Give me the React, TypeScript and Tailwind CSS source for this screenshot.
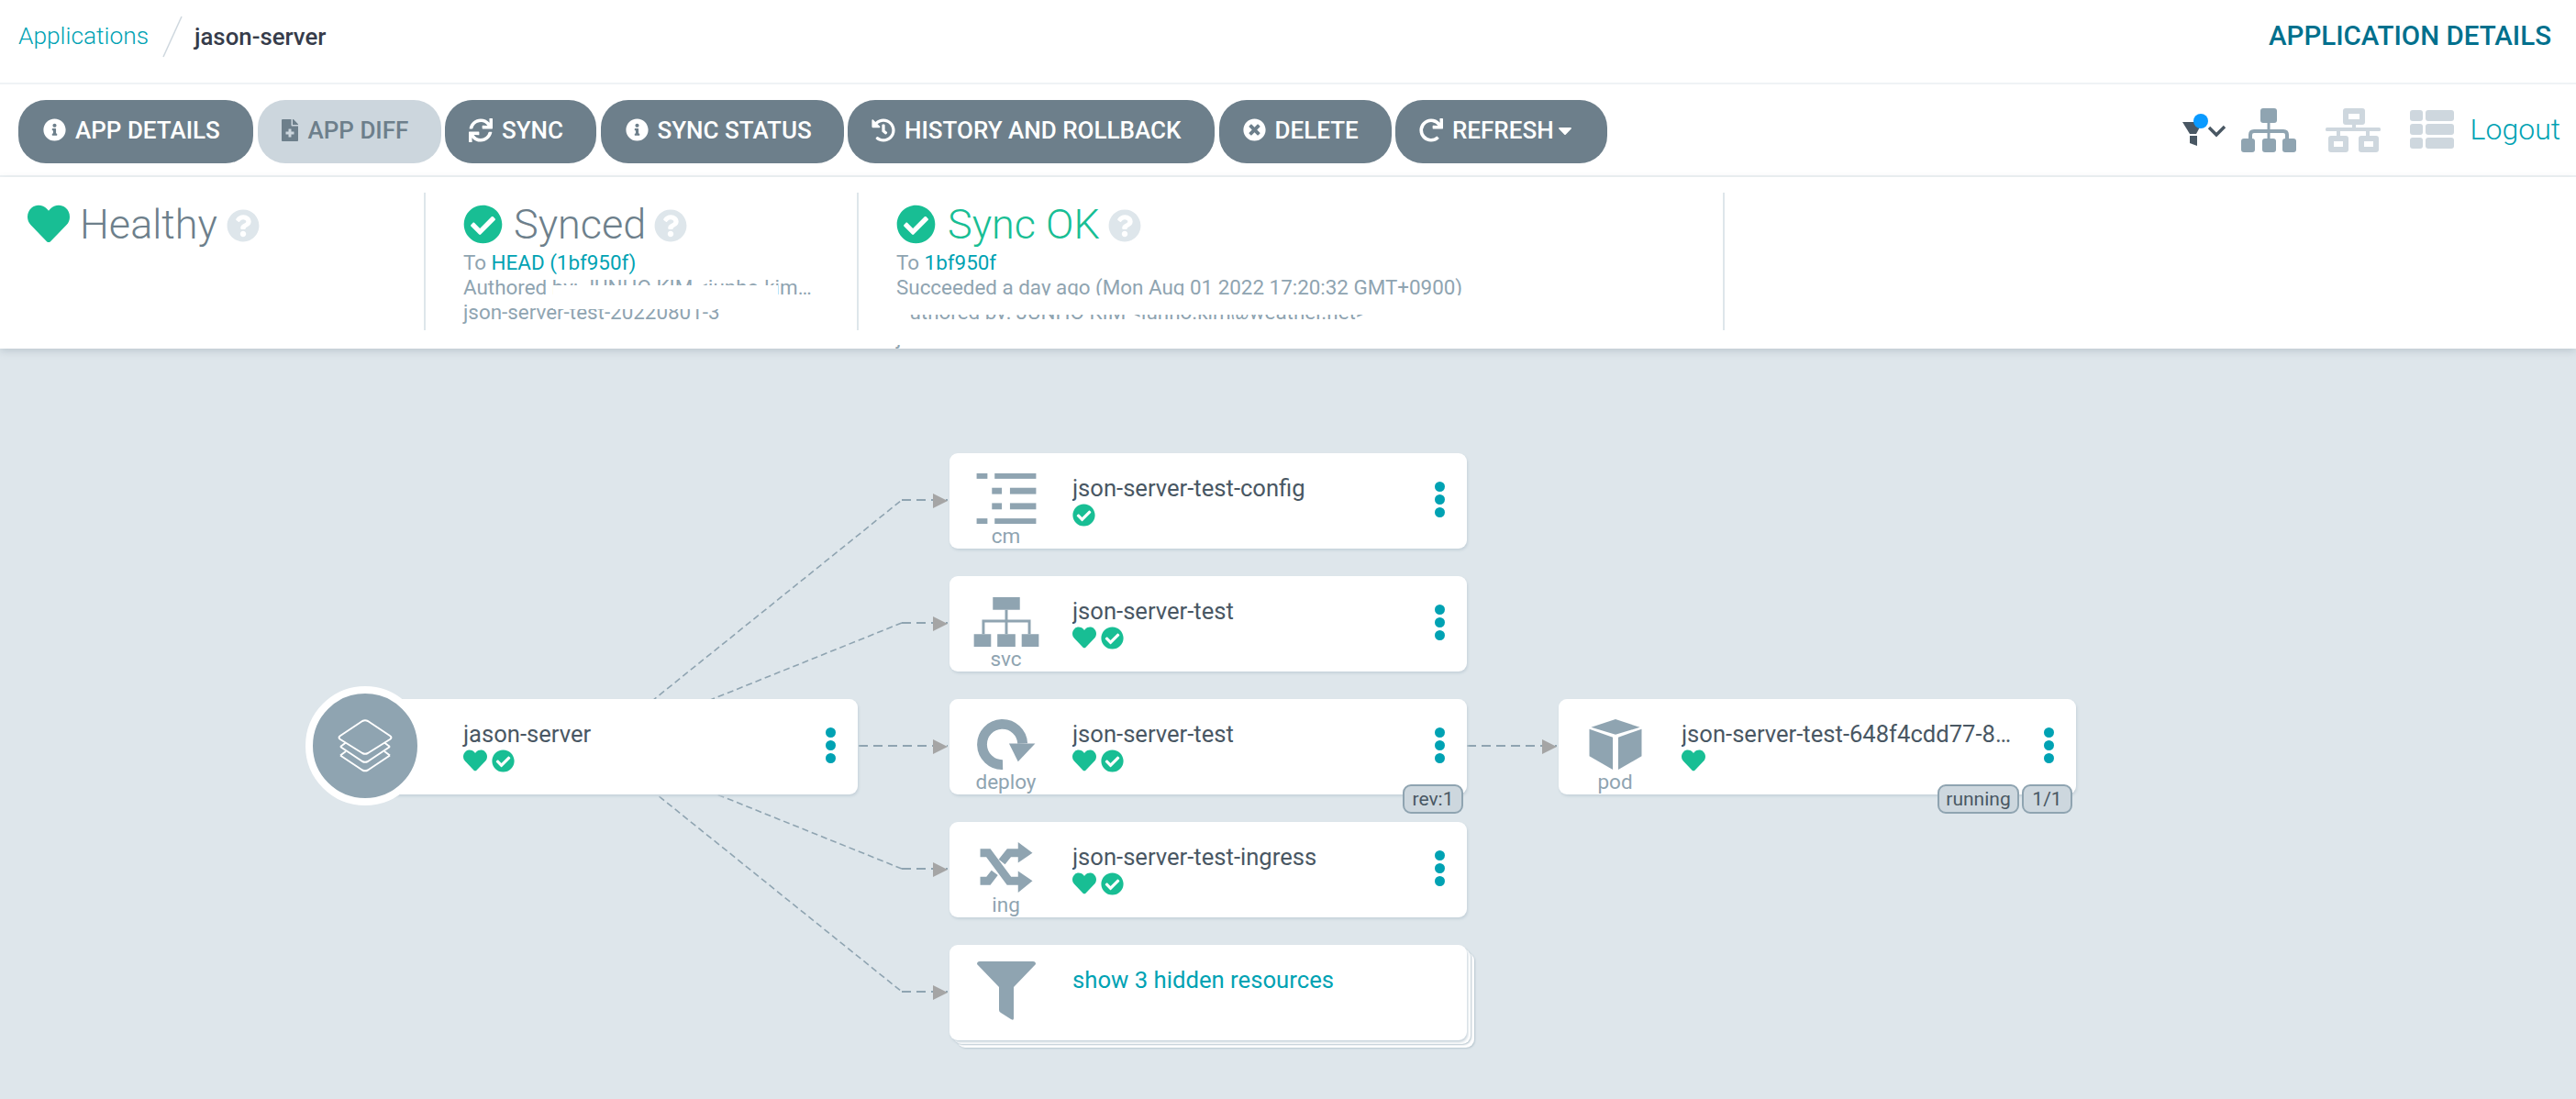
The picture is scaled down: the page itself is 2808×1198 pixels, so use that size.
import React from "react";
import {
  FaInfoCircle,
  FaFileMedical,
  FaSync,
  FaHistory,
  FaTimesCircle,
  FaRedo,
  FaCaretDown,
  FaHeart,
  FaCheckCircle,
  FaQuestionCircle,
} from "react-icons/fa";

const BTN =
  "flex h-[69px] shrink-0 items-center gap-[10px] rounded-[30px] bg-[#6d7f8b] pb-[3px] text-[26px] font-medium leading-none text-white";

function Dots() {
  return (
    <div className="absolute right-[24px] top-[31px] flex flex-col gap-[3px]">
      <span className="block h-[11px] w-[11px] rounded-full bg-[#00a2b3]" />
      <span className="block h-[11px] w-[11px] rounded-full bg-[#00a2b3]" />
      <span className="block h-[11px] w-[11px] rounded-full bg-[#00a2b3]" />
    </div>
  );
}

function Status({ heart = true, check = true }: { heart?: boolean; check?: boolean }) {
  return (
    <div className="mt-[2px] flex h-[26px] items-center gap-[5px] text-[#18be94]">
      {heart && <FaHeart size={26} />}
      {check && <FaCheckCircle size={25} />}
    </div>
  );
}

function Card({
  className,
  icon,
  kind,
  name,
  heart,
  check,
  children,
}: {
  className: string;
  icon: React.ReactNode;
  kind: string;
  name: string;
  heart?: boolean;
  check?: boolean;
  children?: React.ReactNode;
}) {
  return (
    <div className={"absolute flex h-[104px] w-[564px] rounded-[9px] bg-white shadow-[1px_2px_3px_#c6d2da] " + className}>
      <div className="flex w-[123px] shrink-0 flex-col items-center pt-[22px]">
        {icon}
        <div className="text-[22.5px] leading-[27px] text-[#8fa4b1]">{kind}</div>
      </div>
      <div className="ml-[11px] w-[364px] pt-[24px]">
        <div className="truncate text-[25.6px] leading-[28px] text-[#495763]">{name}</div>
        <Status heart={heart} check={check} />
      </div>
      <Dots />
      {children}
    </div>
  );
}

function Badge({ children, className }: { children: React.ReactNode; className: string }) {
  return (
    <div
      className={
        "absolute top-[93px] flex h-[32px] items-center justify-center rounded-[9px] border-2 border-[#8fa4b1] bg-[#cdd7de] text-[21px] leading-none text-[#495763] " +
        className
      }
    >
      {children}
    </div>
  );
}

const G = "#8fa4b1";

function CmIcon() {
  return (
    <svg width="66" height="56" viewBox="0 0 66 56" fill={G}>
      <rect x="0" y="0" width="12" height="6" />
      <rect x="20" y="0" width="46" height="6" />
      <rect x="17" y="16" width="11" height="7" />
      <rect x="37" y="16" width="29" height="7" />
      <rect x="17" y="33" width="11" height="7" />
      <rect x="37" y="33" width="29" height="7" />
      <rect x="0" y="50" width="12" height="6" />
      <rect x="20" y="50" width="46" height="6" />
    </svg>
  );
}

function SvcIcon() {
  return (
    <svg width="72" height="56" viewBox="0 0 72 56" fill={G}>
      <rect x="21" y="1" width="30" height="14" />
      <rect x="34.5" y="15" width="3" height="27" />
      <path d="M9 42V26H63V42H60V29H12V42Z" />
      <rect x="0" y="42" width="19" height="14" />
      <rect x="26" y="42" width="20" height="14" />
      <rect x="53" y="42" width="19" height="14" />
    </svg>
  );
}

function DeployIcon() {
  return (
    <svg width="64" height="56" viewBox="0 0 64 56">
      <path d="M28 50.5A22.5 22.5 0 1 1 50 27" fill="none" stroke={G} strokeWidth="11" />
      <path d="M35 27H64L45 47Z" fill={G} />
    </svg>
  );
}

function IngIcon() {
  return (
    <svg width="58" height="56" viewBox="0 0 58 56" fill="none" stroke={G} strokeWidth="9">
      <path d="M0 12H9L32 43H44" />
      <path d="M0 43H9L16 34" />
      <path d="M24 22L32 12H44" />
      <path d="M42 0L58 12L42 23Z" fill={G} stroke="none" />
      <path d="M42 32L58 43L42 56Z" fill={G} stroke="none" />
    </svg>
  );
}

function FunnelIcon() {
  return (
    <svg width="64" height="64" viewBox="0 0 64 64" fill={G}>
      <path d="M3 0H61Q64 0 64 3L40 28V62Q40 65 37 63L26 56Q24 55 24 53V28L0 3Q0 0 3 0Z" />
    </svg>
  );
}

function PodIcon() {
  return (
    <svg width="58" height="56" viewBox="0 0 58 56" fill={G}>
      <path d="M29 0L56 9L29 17L2 9Z" />
      <path d="M0 11L26 20V56L0 41Z" />
      <path d="M58 11L32 20V56L58 41Z" />
    </svg>
  );
}

function LayersIcon() {
  return (
    <svg width="60" height="58" viewBox="0 0 60 58" fill="none" stroke="#fff" strokeWidth="2" strokeLinejoin="round">
      <path d="M3 39.5L9 35M57 39.5L51 35M3 39.5L27 55.5Q30 57 33 55.5L57 39.5" />
      <path d="M3 30L9 25.5M57 30L51 25.5M3 30L27 46Q30 47.5 33 46L57 30" />
      <path d="M27 2Q30 0.5 33 2L57 18Q60 20 57 22L33 37Q30 38.5 27 37L3 22Q0 20 3 18Z" />
    </svg>
  );
}

function Edge({ y2 }: { y2: number }) {
  return (
    <g>
      <line x1={650} y1={813} x2="983" y2={y2} stroke={G} strokeWidth="1.6" strokeDasharray="7 4" />
      <line x1="983" y1={y2} x2="1033" y2={y2} stroke={G} strokeWidth="1.8" strokeDasharray="10 6" />
      <path d={`M1017 ${y2 - 7}L1033 ${y2 + 1}L1017 ${y2 + 9}Z`} fill="#a5a5a5" />
    </g>
  );
}

export default function App() {
  return (
    <div className="flex h-[1198px] w-[2808px] flex-col overflow-hidden bg-[#dee6eb] font-['Roboto',sans-serif]">
      {/* breadcrumb bar */}
      <div className="flex h-[92px] shrink-0 items-center border-b-2 border-[#eff3f5] bg-white pb-[10px] pl-[20px] pr-[27px]">
        <span className="text-[26.3px] font-light text-[#00a2b3]">Applications</span>
        <svg className="ml-[15px] mr-[13px]" width="22" height="46" viewBox="0 0 22 46">
          <line x1="21" y1="1" x2="1" y2="45" stroke="#ced7de" strokeWidth="1.5" />
        </svg>
        <span className="text-[25.8px] font-medium text-[#363c4a]">jason-server</span>
        <span className="ml-auto -mt-[2px] text-[29.5px] font-medium text-[#00708d]">APPLICATION DETAILS</span>
      </div>

      {/* toolbar */}
      <div className="flex h-[101px] shrink-0 items-center gap-[4.5px] border-b-2 border-[#eff3f5] bg-white pl-[20px] pt-[3px]">
        <div className={BTN + " w-[256px] pl-[27px]"}>
          <FaInfoCircle size={25} />
          APP DETAILS
        </div>
        <div className="flex h-[69px] w-[200px] shrink-0 items-center gap-[8px] rounded-[30px] bg-[#ccd6dd] pb-[3px] pl-[23px] text-[26px] font-medium leading-none text-[#6d7f8b]">
          <FaFileMedical size={24} />
          APP DIFF
        </div>
        <div className={BTN + " w-[165px] pl-[26px]"}>
          <FaSync size={26} />
          SYNC
        </div>
        <div className={BTN + " w-[265px] pl-[27px]"}>
          <FaInfoCircle size={25} />
          SYNC STATUS
        </div>
        <div className={BTN + " w-[400px] pl-[26px]"}>
          <FaHistory size={26} />
          HISTORY AND ROLLBACK
        </div>
        <div className={BTN + " w-[188px] pl-[26px]"}>
          <FaTimesCircle size={25} />
          DELETE
        </div>
        <div className={BTN + " w-[231px] pl-[26px]"}>
          <FaRedo size={26} />
          REFRESH
          <FaCaretDown size={24} className="-ml-[10px]" />
        </div>
        <div className="ml-auto mr-[17px] -mt-[3px] flex items-center">
          <svg className="mr-[16px]" width="48" height="36" viewBox="0 0 48 36">
            <path d="M0 9H22L15 22H8Z" fill="#495763" />
            <path d="M8 24H16V35L8 32Z" fill="#495763" />
            <circle cx="20" cy="8" r="8" fill="#0a9aff" />
            <path d="M29 15L37 23L46 14" fill="none" stroke="#495763" strokeWidth="3.4" />
          </svg>
          <svg className="mr-[32px]" width="60" height="48" viewBox="0 0 60 48" fill="#8fa4b1">
            <rect x="21" y="0" width="18" height="16" rx="3" />
            <rect x="28.5" y="16" width="3" height="18" />
            <path d="M8 34V29Q8 23 14 23H46Q52 23 52 29V34H48V29Q48 27 46 27H14Q12 27 12 29V34Z" />
            <rect x="0" y="33" width="15" height="15" rx="3" />
            <rect x="23" y="33" width="15" height="15" rx="3" />
            <rect x="45" y="33" width="15" height="15" rx="3" />
          </svg>
          <svg className="mr-[32px]" width="60" height="48" viewBox="0 0 60 48" fill="#ced7de">
            <path fillRule="evenodd" d="M22 0H40Q43 0 43 3V15Q43 18 40 18H22Q19 18 19 15V3Q19 0 22 0ZM25 6V12H37V6Z" />
            <rect x="29" y="18" width="4" height="5" />
            <rect x="0" y="21" width="60" height="4" rx="1.5" />
            <rect x="12" y="25" width="4" height="6" />
            <rect x="44" y="25" width="4" height="6" />
            <path fillRule="evenodd" d="M6 30H22Q25 30 25 33V45Q25 48 22 48H6Q3 48 3 45V33Q3 30 6 30ZM9 36V42H19V36Z" />
            <path fillRule="evenodd" d="M39 30H55Q58 30 58 33V45Q58 48 55 48H39Q36 48 36 45V33Q36 30 39 30ZM42 36V42H52V36Z" />
          </svg>
          <svg className="mr-[18px]" width="48" height="43" viewBox="0 0 48 43" fill="#ced7de">
            <rect x="0" y="0" width="14" height="12" rx="3" />
            <rect x="17" y="0" width="31" height="12" rx="3" />
            <rect x="0" y="15" width="14" height="12" rx="3" />
            <rect x="17" y="15" width="31" height="12" rx="3" />
            <rect x="0" y="30" width="14" height="12" rx="3" />
            <rect x="17" y="30" width="31" height="12" rx="3" />
          </svg>
          <span className="-mt-[2px] text-[32px] font-light leading-none text-[#00a2b3]">Logout</span>
        </div>
      </div>

      {/* status panel */}
      <div className="relative z-10 flex h-[187px] shrink-0 overflow-hidden bg-white pt-[17px] text-[22.4px] leading-[27px] text-[#8fa4b1] shadow-[0_3px_8px_rgba(100,120,135,0.25)]">
        <div className="h-[150px] w-[464px] shrink-0 border-r-2 border-[#dee6eb] pl-[30px] pt-[10px]">
          <div className="flex h-[48px] items-center">
            <FaHeart size={46} className="text-[#18be94]" />
            <span className="ml-[11px] text-[45px] font-light leading-none text-[#6d7f8b]">Healthy</span>
            <FaQuestionCircle size={36} className="ml-[10px] mt-[4px] text-[#dee6eb]" />
          </div>
        </div>
        <div className="h-[150px] w-[472px] shrink-0 border-r-2 border-[#dee6eb] pl-[41px] pt-[10px]">
          <div className="flex h-[48px] items-center">
            <FaCheckCircle size={43} className="text-[#18be94]" />
            <span className="ml-[12px] text-[45px] font-light leading-none text-[#6d7f8b]">Synced</span>
            <FaQuestionCircle size={36} className="ml-[9px] mt-[4px] text-[#dee6eb]" />
          </div>
          <div className="mt-[5px] whitespace-nowrap">
            To <span className="text-[#00a2b3]">HEAD (1bf950f)</span>
          </div>
          <div className="w-[382px] truncate">Authored by: JUNHO KIM &lt;junho.kim@weatherai.net&gt;</div>
          <div className="whitespace-nowrap">json-server-test-20220801-3</div>
        </div>
        <div className="h-[150px] w-[944px] shrink-0 border-r-2 border-[#dee6eb] pl-[41px] pt-[10px]">
          <div className="flex h-[48px] items-center">
            <FaCheckCircle size={43} className="text-[#18be94]" />
            <span className="ml-[13px] text-[45px] font-light leading-none text-[#18be94]">Sync OK</span>
            <FaQuestionCircle size={36} className="ml-[9px] mt-[4px] text-[#dee6eb]" />
          </div>
          <div className="mt-[5px] whitespace-nowrap">
            To <span className="text-[#00a2b3]">1bf950f</span>
          </div>
          <div className="whitespace-nowrap">Succeeded a day ago (Mon Aug 01 2022 17:20:32 GMT+0900)</div>
          <div className="whitespace-nowrap">Authored by: JUNHO KIM &lt;junho.kim@weather.net&gt;</div>
          <div className="whitespace-nowrap">json-server-test-20220801-3</div>
        </div>
        {/* torn repaint bands in the panel */}
        <div className="absolute left-[603px] top-[118px] h-[26px] w-[245px] bg-white" />
        <div className="absolute left-[970px] top-[129px] h-[21px] w-[905px] bg-white" />
        <div className="absolute left-[970px] top-[129px] h-[26px] w-[22px] bg-white" />
        <div className="absolute left-[970px] top-[155px] h-[28px] w-[905px] bg-white" />
      </div>

      {/* resource tree */}
      <div className="relative flex-1">
        <svg className="absolute left-0 top-0" width="2808" height="818" viewBox="0 380 2808 818">
          <Edge y2={545} />
          <Edge y2={679} />
          <Edge y2={947} />
          <Edge y2={1081} />
          <line x1="936" y1="813" x2="1033" y2="813" stroke={G} strokeWidth="1.8" strokeDasharray="10 6" />
          <path d="M1017 806L1033 814L1017 822Z" fill="#a5a5a5" />
          <line x1="1599" y1="813" x2="1697" y2="813" stroke={G} strokeWidth="1.8" strokeDasharray="10 6" />
          <path d="M1681 806L1697 814L1681 822Z" fill="#a5a5a5" />
        </svg>

        {/* application root node */}
        <div className="absolute left-[400px] top-[382px] flex h-[104px] w-[535px] rounded-[9px] bg-white pl-[105px] pt-[24px] shadow-[1px_2px_3px_#c6d2da]">
          <div>
            <div className="text-[25.6px] leading-[28px] text-[#495763]">jason-server</div>
            <Status />
          </div>
          <Dots />
        </div>
        <div className="absolute left-[333px] top-[368px] flex h-[130px] w-[130px] items-center justify-center rounded-full border-[8px] border-white bg-[#8fa4b1]">
          <LayersIcon />
        </div>

        <Card className="left-[1035px] top-[114px]" icon={<CmIcon />} kind="cm" name="json-server-test-config" heart={false} />
        <Card className="left-[1035px] top-[248px]" icon={<SvcIcon />} kind="svc" name="json-server-test" />
        <Card className="left-[1035px] top-[382px]" icon={<DeployIcon />} kind="deploy" name="json-server-test">
          <Badge className="right-[4px] w-[66px]">rev:1</Badge>
        </Card>
        <Card className="left-[1035px] top-[516px]" icon={<IngIcon />} kind="ing" name="json-server-test-ingress" />

        <div className="absolute left-[1043px] top-[658px] h-[104px] w-[564px] rounded-[9px] bg-white shadow-[1px_1px_2px_#b9c7d0]" />
        <div className="absolute left-[1039px] top-[654px] h-[104px] w-[564px] rounded-[9px] bg-white shadow-[1px_1px_2px_#b9c7d0]" />
        <div className="absolute left-[1035px] top-[650px] flex h-[104px] w-[564px] rounded-[9px] bg-white shadow-[1px_2px_3px_#c6d2da]">
          <div className="flex w-[123px] shrink-0 flex-col items-center pt-[18px]">
            <FunnelIcon />
          </div>
          <div className="ml-[11px] pt-[24px] text-[25.7px] leading-[28px] text-[#00a2b3]">show 3 hidden resources</div>
        </div>

        <Card className="left-[1699px] top-[382px]" icon={<PodIcon />} kind="pod" name="json-server-test-648f4cdd77-8zxbn" check={false}>
          <Badge className="right-[62px] w-[89px]">running</Badge>
          <Badge className="right-[4px] w-[55px]">1/1</Badge>
        </Card>
      </div>
    </div>
  );
}
